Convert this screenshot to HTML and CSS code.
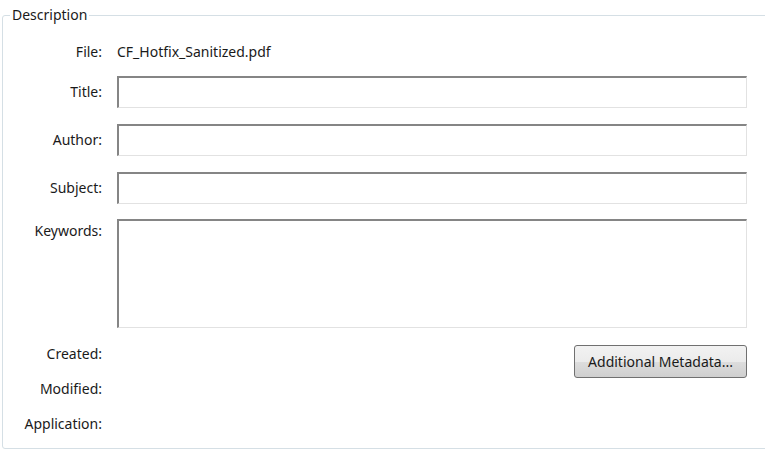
FILE: index.html
```html
<!DOCTYPE html>
<html>
<head>
<meta charset="utf-8">
<link rel="stylesheet" href="styles.css">
</head>
<body>
<fieldset class="group">
  <legend class="group-title">Description</legend>
  <div class="form">
    <div class="row row-file">
      <div class="label">File:</div>
      <div class="value">CF_Hotfix_Sanitized.pdf</div>
    </div>
    <div class="row row-input">
      <div class="label">Title:</div>
      <div class="field"></div>
    </div>
    <div class="row row-input">
      <div class="label">Author:</div>
      <div class="field"></div>
    </div>
    <div class="row row-input">
      <div class="label">Subject:</div>
      <div class="field"></div>
    </div>
    <div class="row row-area">
      <div class="label label-top">Keywords:</div>
      <div class="field field-area"></div>
    </div>
    <div class="row row-bottom">
      <div class="bottom-labels">
        <div class="label">Created:</div>
        <div class="label">Modified:</div>
        <div class="label">Application:</div>
      </div>
      <div class="actions">
        <button class="btn">Additional Metadata...</button>
      </div>
    </div>
  </div>
</fieldset>
</body>
</html>
```

FILE: styles.css
```css
html, body {
  margin: 0;
  padding: 0;
  background: #ffffff;
  overflow: hidden;
}
body {
  width: 765px;
  height: 459px;
  font-family: "Noto Sans", "Open Sans", sans-serif;
  font-size: 14px;
  color: #1a1a1a;
}
.group {
  margin: 6px 0 0 2px;
  width: 800px;
  height: 443px;
  box-sizing: border-box;
  border: 1px solid #d5dfe5;
  border-radius: 3px;
  padding: 0;
}
.group-title {
  margin-left: 7px;
  padding: 0 2px 0 2px;
  line-height: 18px;
}
.form {
  display: flex;
  flex-direction: column;
  padding-top: 20px;
  width: 744px;
}
.row {
  display: flex;
  align-items: center;
  column-gap: 15px;
}
.label {
  width: 99px;
  text-align: right;
  line-height: 20px;
}
.row-file {
  height: 16px;
}
.row-file .value {
  line-height: 20px;
}
.row-input {
  margin-top: 16px;
}
.row-area {
  margin-top: 15px;
  align-items: flex-start;
}
.label-top {
  margin-top: 2px;
}
.field {
  width: 630px;
  height: 32px;
  box-sizing: border-box;
  border-top: 2px solid #858585;
  border-left: 2px solid #858585;
  border-right: 1px solid #e2e2e2;
  border-bottom: 1px solid #e2e2e2;
  background: #ffffff;
}
.field-area {
  height: 109px;
}
.row-bottom {
  margin-top: 16px;
  align-items: flex-start;
}
.bottom-labels {
  display: flex;
  flex-direction: column;
  row-gap: 15px;
}
.actions {
  width: 630px;
  display: flex;
  justify-content: flex-end;
}
.btn {
  margin-top: 1px;
  width: 173px;
  height: 33px;
  border: 1px solid #707070;
  border-radius: 3px;
  background: linear-gradient(#f2f2f2 0%, #ebebeb 50%, #dddddd 51%, #cfcfcf 100%);
  font-family: "Noto Sans", "Open Sans", sans-serif;
  font-size: 14px;
  color: #1a1a1a;
  padding: 0;
}
```
